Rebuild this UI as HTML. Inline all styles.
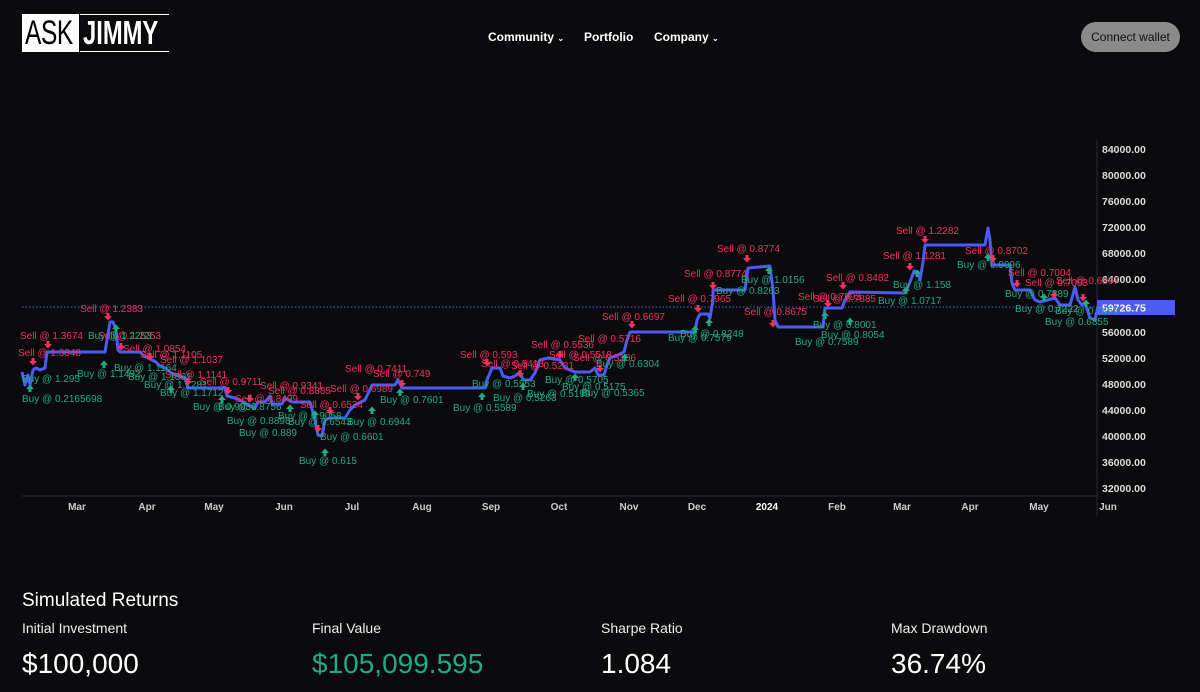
<!DOCTYPE html>
<html><head><meta charset="utf-8"><style>
*{margin:0;padding:0;box-sizing:border-box}
body{width:1200px;height:692px;background:#0b0b0e;color:#fff;font-family:"Liberation Sans",sans-serif;position:relative;overflow:hidden}
.abs{position:absolute}
.nav{font-size:12px;font-weight:bold;top:30px}
.lbl{font-size:14px;top:620px;color:#eee}
.val{font-size:28px;top:648px}
.sq{display:inline-block;transform-origin:left center;white-space:nowrap}
</style></head><body>
<div class="abs" style="left:22px;top:14px;width:57px;height:38px;background:#fff;color:#000;overflow:hidden;"><span class="sq" style="font-size:34px;line-height:38px;margin-left:3px;transform:scaleX(0.72);letter-spacing:-0.5px">ASK</span></div>
<div class="abs" style="left:80px;top:14px;width:89px;height:38px;border-top:1px solid #fff;border-bottom:1px solid #fff;overflow:hidden"><span class="sq" style="font-size:33px;font-weight:bold;line-height:35px;margin-left:3px;transform:scaleX(0.72)">JIMMY</span></div>
<div class="abs nav" style="left:488px">Community <span style="font-size:8px">⌄</span></div>
<div class="abs nav" style="left:584px">Portfolio</div>
<div class="abs nav" style="left:654px">Company <span style="font-size:8px">⌄</span></div>
<div class="abs" style="left:1081px;top:22px;width:99px;height:30px;border-radius:15px;background:#8a8a8a;color:#111;font-size:12px;line-height:30px;text-align:center">Connect wallet</div>

<svg class="abs" style="left:0;top:0" width="1200" height="692" font-family="Liberation Sans,sans-serif">
<defs>
<g id="dn"><path d="M-1.5,-5h3v3h2.5l-4,4.5l-4,-4.5h2.5z" fill="#f0335f"/></g>
<g id="up"><path d="M-1.5,5h3v-3h2.5l-4,-4.5l-4,4.5h2.5z" fill="#22ab80"/></g>
</defs>
<line x1="22" y1="496" x2="1097" y2="496" stroke="#2a2a40"/>
<line x1="1097" y1="140" x2="1097" y2="516" stroke="#2a2a40"/>
<line x1="22" y1="307" x2="1097" y2="307" stroke="#4b5bf5" stroke-dasharray="1.5 2"/>
<g font-size="10.5" fill="#ddd" font-weight="bold">
<text x="1102" y="153">84000.00</text><text x="1102" y="179">80000.00</text><text x="1102" y="205">76000.00</text><text x="1102" y="231">72000.00</text><text x="1102" y="257">68000.00</text><text x="1102" y="283">64000.00</text><text x="1102" y="362">52000.00</text><text x="1102" y="388">48000.00</text><text x="1102" y="414">44000.00</text><text x="1102" y="440">40000.00</text><text x="1102" y="466">36000.00</text><text x="1102" y="492">32000.00</text><text x="1102" y="336">56000.00</text>
</g>
<rect x="1097" y="300" width="78" height="15" fill="#4f5bf0"/>
<text x="1102" y="311.5" font-size="10.5" fill="#fff" font-weight="bold">59726.75</text>
<g font-size="10" fill="#ccc" font-weight="bold" text-anchor="middle">
<text x="77" y="510">Mar</text><text x="147" y="510">Apr</text><text x="214" y="510">May</text><text x="284" y="510">Jun</text><text x="352" y="510">Jul</text><text x="422" y="510">Aug</text><text x="491" y="510">Sep</text><text x="559" y="510">Oct</text><text x="629" y="510">Nov</text><text x="697" y="510">Dec</text><text x="767" y="510" fill="#fff">2024</text><text x="837" y="510">Feb</text><text x="902" y="510">Mar</text><text x="970" y="510">Apr</text><text x="1039" y="510">May</text><text x="1108" y="510">Jun</text>
</g>
<polyline fill="none" stroke="#4b5bf5" stroke-width="3" stroke-linejoin="round" points="22,372 25,385 28,375 30,385 33,370 36,368 40,370 45,368 47,352 105,352 107,340 110,322 113,322 116,330 118,350 120,352 140,352 143,355 148,358 152,360 156,362 160,366 165,368 170,372 175,375 185,378 188,388 225,388 227,396 235,398 240,400 248,405 255,408 258,402 265,402 270,396 272,404 282,404 285,398 292,402 310,402 315,420 318,435 322,436 325,420 330,418 345,418 350,410 355,405 365,400 372,385 395,385 398,380 402,388 485,388 487,380 492,368 500,368 503,376 510,378 515,376 520,372 523,380 530,380 535,373 540,360 548,358 560,360 565,368 575,372 590,372 595,368 598,375 604,375 607,365 610,358 618,355 624,352 627,340 630,332 695,332 697,320 700,314 708,314 710,318 713,300 713,290 745,290 748,268 770,266 773,290 775,320 778,327 823,327 825,308 842,308 845,300 850,292 905,293 910,282 914,271 918,272 920,280 923,262 925,245 985,245 988,228 990,240 992,265 1010,265 1012,283 1015,290 1030,290 1035,300 1040,302 1055,298 1060,305 1070,305 1075,287 1078,300 1082,305 1085,303 1090,318 1095,320 1098,306"/>
<g font-size="10" fill="#f0335f">
<text x="20" y="339">Sell @ 1.3674</text><text x="18" y="356">Sell @ 1.3848</text><text x="80" y="312">Sell @ 1.2383</text><text x="98" y="339">Sell @ 1.2253</text><text x="123" y="352">Sell @ 1.0854</text><text x="140" y="358">Sell @ 1.1105</text><text x="160" y="363">Sell @ 1.1037</text><text x="165" y="378">Sell @ 1.1141</text><text x="200" y="385">Sell @ 0.9711</text><text x="260" y="389">Sell @ 0.9341</text><text x="268" y="394">Sell @ 0.8885</text><text x="235" y="402">Sell @ 0.8499</text><text x="330" y="392">Sell @ 0.6989</text><text x="300" y="408">Sell @ 0.6524</text><text x="345" y="372">Sell @ 0.7411</text><text x="373" y="377">Sell @ 0.749</text><text x="460" y="358">Sell @ 0.593</text><text x="481" y="367">Sell @ 0.5413</text><text x="511" y="369">Sell @ 0.5231</text><text x="531" y="348">Sell @ 0.5536</text><text x="549" y="358">Sell @ 0.5518</text><text x="573" y="361">Sell @ 0.5106</text><text x="578" y="342">Sell @ 0.5716</text><text x="602" y="320">Sell @ 0.6697</text><text x="668" y="302">Sell @ 0.7965</text><text x="684" y="277">Sell @ 0.8774</text><text x="717" y="252">Sell @ 0.8774</text><text x="744" y="315">Sell @ 0.8675</text><text x="798" y="300">Sell @ 0.7993</text><text x="813" y="302">Sell @ 0.7885</text><text x="826" y="281">Sell @ 0.8482</text><text x="883" y="259">Sell @ 1.1281</text><text x="896" y="234">Sell @ 1.2282</text><text x="965" y="254">Sell @ 0.8702</text><text x="1008" y="276">Sell @ 0.7004</text><text x="1025" y="286">Sell @ 0.7093</text><text x="1056" y="284">Sell @ 0.6897</text>
</g>
<g font-size="10" fill="#22ab80">
<text x="22" y="382">Buy @ 1.295</text><text x="22" y="402">Buy @ 0.2165698</text><text x="77" y="377">Buy @ 1.1492</text><text x="88" y="339">Buy @ 1.2253</text><text x="114" y="371">Buy @ 1.1164</text><text x="128" y="380">Buy @ 1.1361</text><text x="144" y="388">Buy @ 1.1281</text><text x="160" y="396">Buy @ 1.1712</text><text x="193" y="410">Buy @ 0.9931</text><text x="218" y="410">Buy @ 0.8756</text><text x="278" y="419">Buy @ 0.9058</text><text x="227" y="424">Buy @ 0.8898</text><text x="239" y="436">Buy @ 0.889</text><text x="288" y="425">Buy @ 0.6543</text><text x="347" y="425">Buy @ 0.6944</text><text x="320" y="440">Buy @ 0.6601</text><text x="299" y="464">Buy @ 0.615</text><text x="380" y="403">Buy @ 0.7601</text><text x="453" y="411">Buy @ 0.5589</text><text x="472" y="387">Buy @ 0.5553</text><text x="493" y="401">Buy @ 0.5263</text><text x="545" y="383">Buy @ 0.5705</text><text x="527" y="397">Buy @ 0.5199</text><text x="562" y="390">Buy @ 0.5175</text><text x="581" y="396">Buy @ 0.5365</text><text x="596" y="367">Buy @ 0.6304</text><text x="668" y="341">Buy @ 0.7579</text><text x="680" y="337">Buy @ 0.8248</text><text x="716" y="294">Buy @ 0.8263</text><text x="741" y="283">Buy @ 1.0156</text><text x="813" y="328">Buy @ 0.8001</text><text x="821" y="338">Buy @ 0.8054</text><text x="795" y="345">Buy @ 0.7589</text><text x="878" y="304">Buy @ 1.0717</text><text x="893" y="288">Buy @ 1.158</text><text x="957" y="268">Buy @ 0.9096</text><text x="1005" y="297">Buy @ 0.7389</text><text x="1015" y="312">Buy @ 0.7222</text><text x="1055" y="314">Buy @ 0.7455</text><text x="1045" y="325">Buy @ 0.6855</text>
</g>
<g>
<use href="#dn" x="108" y="318"/><use href="#dn" x="48" y="346"/><use href="#dn" x="33" y="363"/><use href="#dn" x="121" y="348"/><use href="#dn" x="150" y="358"/><use href="#dn" x="188" y="383"/><use href="#dn" x="228" y="392"/><use href="#dn" x="250" y="400"/><use href="#dn" x="318" y="430"/><use href="#dn" x="330" y="412"/><use href="#dn" x="358" y="398"/><use href="#dn" x="402" y="385"/><use href="#dn" x="487" y="364"/><use href="#dn" x="520" y="375"/><use href="#dn" x="560" y="356"/><use href="#dn" x="600" y="370"/><use href="#dn" x="632" y="326"/><use href="#dn" x="698" y="310"/><use href="#dn" x="713" y="287"/><use href="#dn" x="747" y="260"/><use href="#dn" x="773" y="325"/><use href="#dn" x="828" y="305"/><use href="#dn" x="843" y="287"/><use href="#dn" x="910" y="268"/><use href="#dn" x="925" y="241"/><use href="#dn" x="993" y="260"/><use href="#dn" x="1017" y="285"/><use href="#dn" x="1054" y="296"/><use href="#dn" x="1083" y="299"/>
<use href="#up" x="30" y="387"/><use href="#up" x="104" y="363"/><use href="#up" x="116" y="327"/><use href="#up" x="171" y="388"/><use href="#up" x="222" y="398"/><use href="#up" x="290" y="407"/><use href="#up" x="315" y="413"/><use href="#up" x="325" y="451"/><use href="#up" x="372" y="409"/><use href="#up" x="400" y="391"/><use href="#up" x="482" y="395"/><use href="#up" x="523" y="385"/><use href="#up" x="575" y="376"/><use href="#up" x="625" y="356"/><use href="#up" x="695" y="328"/><use href="#up" x="709" y="321"/><use href="#up" x="769" y="269"/><use href="#up" x="825" y="314"/><use href="#up" x="850" y="320"/><use href="#up" x="906" y="289"/><use href="#up" x="917" y="272"/><use href="#up" x="988" y="256"/><use href="#up" x="1044" y="296"/><use href="#up" x="1086" y="302"/>
</g>
</svg>

<div class="abs" style="left:22px;top:590px;font-size:19px">Simulated Returns</div>
<div class="abs lbl" style="left:22px">Initial Investment</div>
<div class="abs lbl" style="left:312px">Final Value</div>
<div class="abs lbl" style="left:601px">Sharpe Ratio</div>
<div class="abs lbl" style="left:891px">Max Drawdown</div>
<div class="abs val" style="left:22px">$100,000</div>
<div class="abs val" style="left:312px;color:#22ab80">$105,099.595</div>
<div class="abs val" style="left:601px">1.084</div>
<div class="abs val" style="left:891px">36.74%</div>
</body></html>
